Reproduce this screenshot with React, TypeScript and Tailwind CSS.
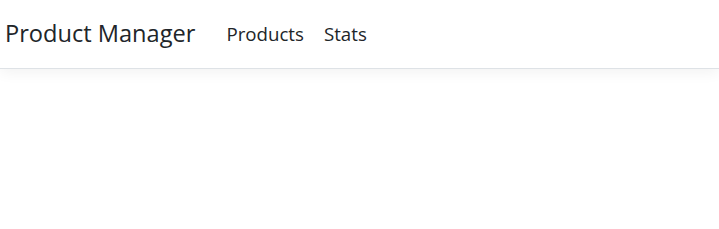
import React from 'react';

const links = ['Products', 'Stats'];

export default function App() {
  return (
    <div className="min-h-[229px] bg-white font-['Open_Sans',sans-serif] text-[#212529]">
      <nav className="flex h-[69px] items-center border-b border-[#dee2e6] bg-white pl-[5px] shadow-[0_3px_14px_rgba(0,0,0,0.06)]">
        <a href="#" className="mr-[21px] text-[23.6px] leading-none text-[#212529]">
          Product Manager
        </a>
        <ul className="flex items-center">
          {links.map((l) => (
            <li key={l}>
              <a href="#" className="block px-[10px] text-[18.7px] leading-none text-[#212529]">
                {l}
              </a>
            </li>
          ))}
        </ul>
      </nav>
    </div>
  );
}
